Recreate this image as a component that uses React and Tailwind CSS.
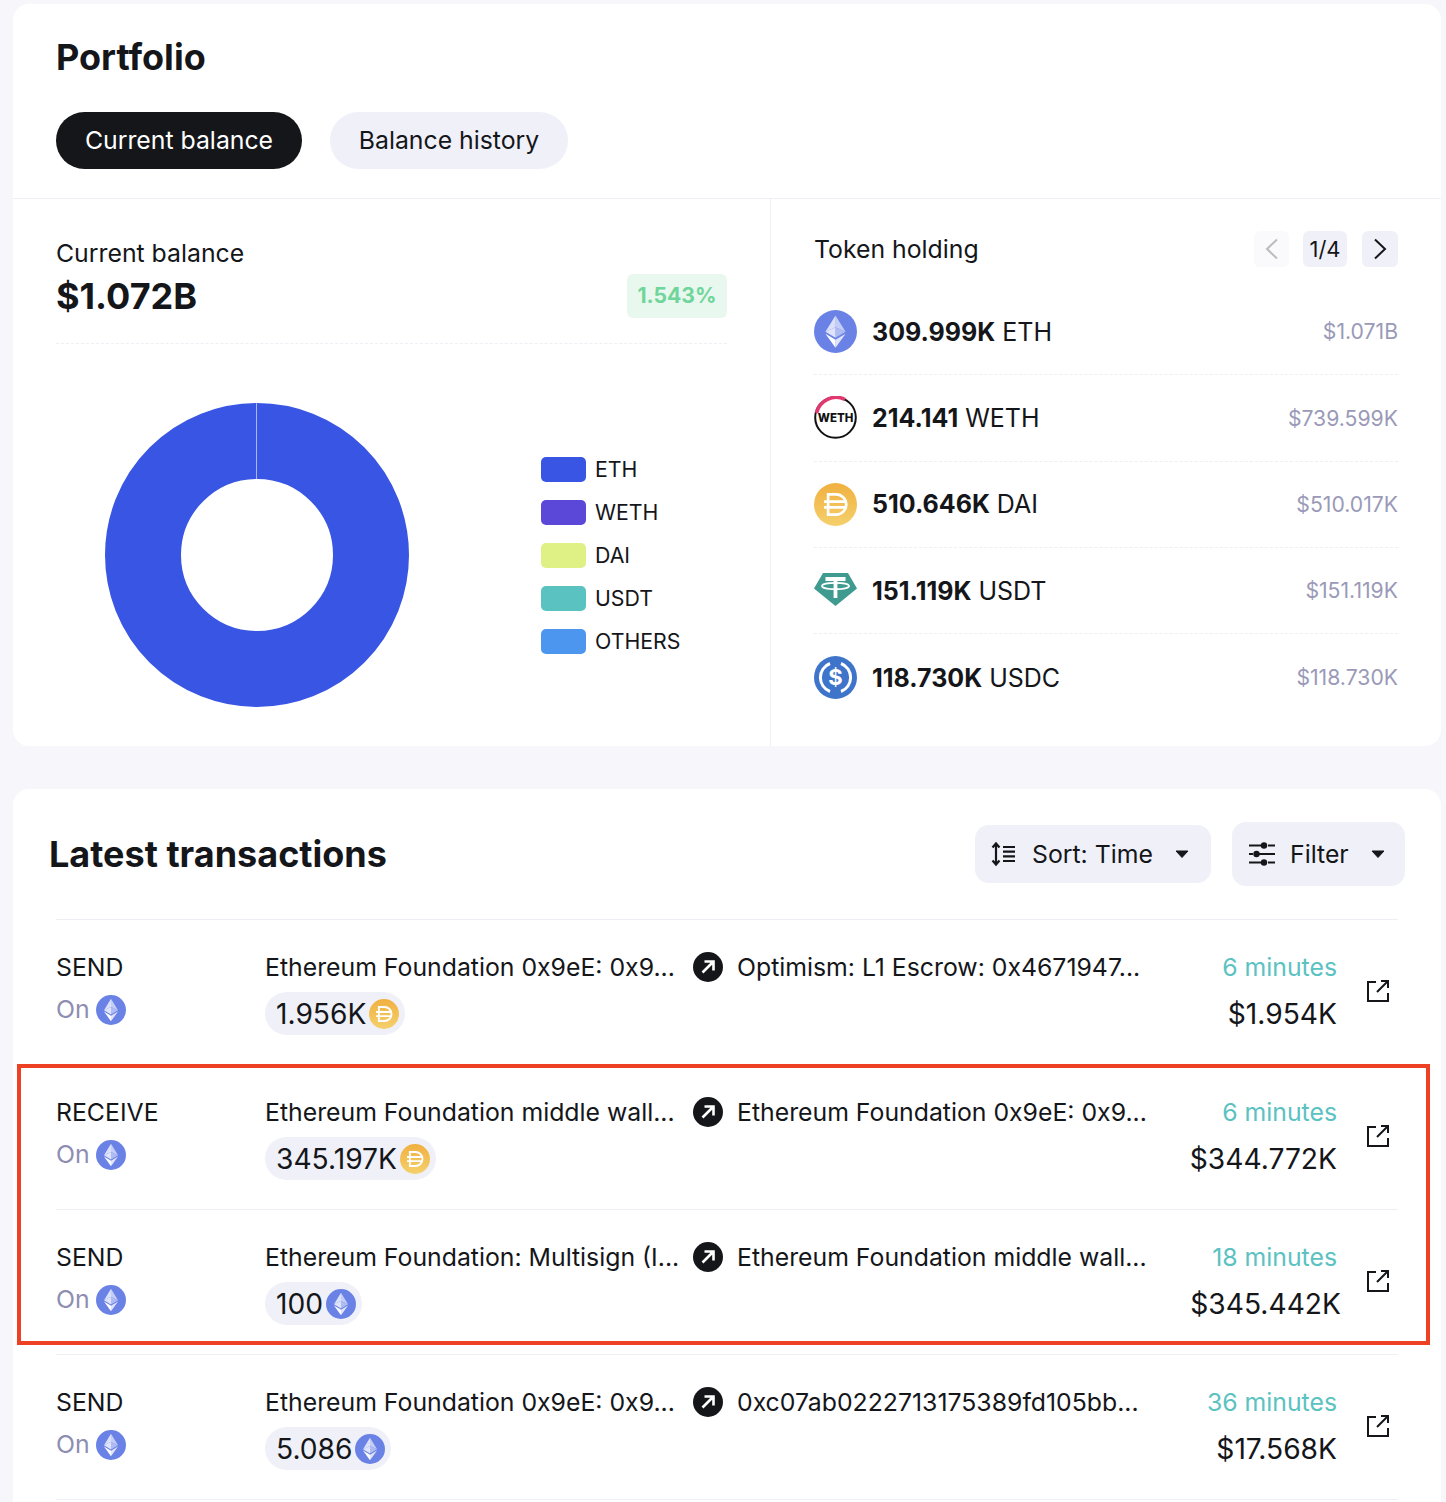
import React from 'react';

const tokens = [
  { amount: '309.999K', symbol: 'ETH', value: '$1.071B' },
  { amount: '214.141', symbol: 'WETH', value: '$739.599K' },
  { amount: '510.646K', symbol: 'DAI', value: '$510.017K' },
  { amount: '151.119K', symbol: 'USDT', value: '$151.119K' },
  { amount: '118.730K', symbol: 'USDC', value: '$118.730K' },
];

const legend = [
  { name: 'ETH', color: 'bg-[#3955e3]' },
  { name: 'WETH', color: 'bg-[#5b48d9]' },
  { name: 'DAI', color: 'bg-[#dff085]' },
  { name: 'USDT', color: 'bg-[#5bc2c2]' },
  { name: 'OTHERS', color: 'bg-[#4d96ef]' },
];

const transactions = [
  { type: 'SEND', from: 'Ethereum Foundation 0x9eE: 0x9...', to: 'Optimism: L1 Escrow: 0x4671947...', amount: '1.956K', coin: 'DAI', time: '6 minutes', usd: '$1.954K' },
  { type: 'RECEIVE', from: 'Ethereum Foundation middle wall...', to: 'Ethereum Foundation 0x9eE: 0x9...', amount: '345.197K', coin: 'DAI', time: '6 minutes', usd: '$344.772K' },
  { type: 'SEND', from: 'Ethereum Foundation: Multisign (I...', to: 'Ethereum Foundation middle wall...', amount: '100', coin: 'ETH', time: '18 minutes', usd: '$345.442K', over: true },
  { type: 'SEND', from: 'Ethereum Foundation 0x9eE: 0x9...', to: '0xc07ab0222713175389fd105bb...', amount: '5.086', coin: 'ETH', time: '36 minutes', usd: '$17.568K' },
];

const EthCoin = ({ size }) => (
  <svg width={size} height={size} viewBox="0 0 32 32" className="shrink-0">
    <circle cx="16" cy="16" r="16" fill="#6a82e6" />
    <path d="M16 4v8.900l7.500 3.300z" fill="#c3cdf6" />
    <path d="M16 4 8.500 16.200l7.500-3.300z" fill="#fff" fillOpacity=".75" />
    <path d="M16 12.900v7.800l7.500-4.500z" fill="#aebcf2" />
    <path d="M16 12.900l-7.500 3.300 7.500 4.500z" fill="#dfe4fa" />
    <path d="M16 22.200V28l7.500-10.400z" fill="#dfe4fa" />
    <path d="M16 22.200l-7.500-4.600L16 28z" fill="#fff" />
  </svg>
);

const DaiCoin = ({ size, id }) => (
  <svg width={size} height={size} viewBox="0 0 32 32" className="shrink-0">
    <defs>
      <linearGradient id={id} x1="0" y1="0" x2="0" y2="1">
        <stop offset="0" stopColor="#f0b040" />
        <stop offset="1" stopColor="#f5d06c" />
      </linearGradient>
    </defs>
    <circle cx="16" cy="16" r="16" fill={`url(#${id})`} />
    <path d="M10.500 8.500h6a7.500 7.500 0 0 1 0 15h-6z" fill="none" stroke="#fff" strokeWidth="2" />
    <path d="M7.500 13.800h17M7.500 18.200h17" stroke="#fff" strokeWidth="2" />
  </svg>
);

const WethCoin = () => (
  <svg width="43" height="43" viewBox="0 0 43 43" className="shrink-0">
    <circle cx="21.500" cy="21.500" r="20.300" fill="#fff" stroke="#111" strokeWidth="2" />
    <path d="M2.500 17A20 20 0 0 1 31 3.500" fill="none" stroke="#e0386f" strokeWidth="3.600" />
    <text x="21.500" y="25.500" textAnchor="middle" fontSize="11.500" fontWeight="800" fill="#111" fontFamily="Inter, sans-serif">WETH</text>
  </svg>
);

const UsdtCoin = () => (
  <svg width="43" height="43" viewBox="0 0 43 43" className="shrink-0">
    <path d="M9 4h25l9 15.500L21.500 37 0 19.500z" fill="#3f9a90" />
    <path d="M11.500 10h20M21.500 10v19" stroke="#fff" strokeWidth="3.800" fill="none" />
    <ellipse cx="21.500" cy="17" rx="13.500" ry="3.200" fill="none" stroke="#fff" strokeWidth="1.800" />
  </svg>
);

const UsdcCoin = () => (
  <svg width="43" height="43" viewBox="0 0 43 43" className="shrink-0">
    <circle cx="21.500" cy="21.500" r="21.500" fill="#3f74cb" />
    <path d="M16 7.500a15 15 0 0 0 0 28M27 7.500a15 15 0 0 1 0 28" fill="none" stroke="#fff" strokeWidth="3" />
    <text x="21.500" y="29" textAnchor="middle" fontSize="22" fontWeight="700" fill="#fff" fontFamily="Inter, sans-serif">$</text>
  </svg>
);

const TokenIcon = ({ symbol }) => {
  if (symbol === 'ETH') return <EthCoin size={43} />;
  if (symbol === 'WETH') return <WethCoin />;
  if (symbol === 'DAI') return <DaiCoin size={43} id="dai-token" />;
  if (symbol === 'USDT') return <UsdtCoin />;
  return <UsdcCoin />;
};

const Caret = () => (
  <svg width="14" height="8" viewBox="0 0 14 8" className="shrink-0">
    <path d="M1 1h12L7 7.500z" fill="#14161a" stroke="#14161a" strokeLinejoin="round" />
  </svg>
);

const SortIcon = () => (
  <svg width="26" height="26" viewBox="0 0 26 26" fill="none" stroke="#14161a" strokeWidth="2.200" className="shrink-0">
    <path d="M6 3v20M2.500 6.500 6 2.500l3.500 4M2.500 19.500l3.500 4 3.500-4" />
    <path d="M13 6h12M13 10.700h12M13 15.300h12M13 20h12" />
  </svg>
);

const FilterIcon = () => (
  <svg width="28" height="24" viewBox="0 0 28 24" fill="none" stroke="#14161a" strokeWidth="2.200" className="shrink-0">
    <path d="M1 3.500h13M20 3.500h7M1 12h4M11 12h16M1 20.500h13M20 20.500h7" />
    <circle cx="16" cy="3.500" r="3.200" fill="#14161a" stroke="none" />
    <circle cx="8.500" cy="12" r="3.200" fill="#14161a" stroke="none" />
    <circle cx="16" cy="20.500" r="3.200" fill="#14161a" stroke="none" />
  </svg>
);

const ArrowBadge = () => (
  <svg width="30" height="30" viewBox="0 0 30 30" className="shrink-0">
    <circle cx="15" cy="15" r="15" fill="#14161a" />
    <path d="M9.500 20.500 20 10M11.500 9.500H20.500V18.500" fill="none" stroke="#fff" strokeWidth="2.600" />
  </svg>
);

const ExternalIcon = () => (
  <svg width="22" height="22" viewBox="0 0 22 22" fill="none" stroke="#14161a" strokeWidth="2" className="shrink-0">
    <path d="M9 2H1v19h20v-8" />
    <path d="M10 12 20.500 1.500M14 1h7v7" />
  </svg>
);

const Donut = () => (
  <svg width="304" height="304" viewBox="0 0 304 304">
    <circle cx="152" cy="152" r="114" fill="none" stroke="#3955e3" strokeWidth="76" />
    <path d="M151.500 0v76" stroke="#a9b6f0" strokeWidth="1" />
  </svg>
);

const TxRow = ({ tx }) => (
  <div className="flex items-start h-[145px] pt-[32px] border-b border-[#eeeef5]">
    <div className="w-[209px] shrink-0">
      <div className="h-[30px] leading-[30px] text-[24.800px] text-[#14161a]">{tx.type}</div>
      <div className="flex items-center gap-[6px] mt-[13px] h-[30px]">
        <span className="text-[24.800px] text-[#8e8eb2]">On</span>
        <EthCoin size={30} />
      </div>
    </div>
    <div className="w-[428px] shrink-0">
      <div className="h-[30px] leading-[30px] text-[24.800px] text-[#14161a] whitespace-nowrap">{tx.from}</div>
      <div className="inline-flex items-center h-[43px] mt-[10px] pl-[11px] pr-[6px] gap-[3px] rounded-full bg-[#f0f1f8]">
        <span className="text-[28.200px] pt-px text-[#14161a]">{tx.amount}</span>
        {tx.coin === 'DAI' ? <DaiCoin size={30} id={`dai-${tx.amount}`} /> : <EthCoin size={30} />}
      </div>
    </div>
    <ArrowBadge />
    <div className="ml-[14px] flex-1 min-w-0 h-[30px] leading-[30px] text-[24.800px] text-[#14161a] whitespace-nowrap">{tx.to}</div>
    <div className="w-[190px] shrink-0 text-right">
      <div className="h-[30px] leading-[30px] text-[24.800px] text-[#5bc2c2]">{tx.time}</div>
      <div className={`h-[43px] leading-[45px] mt-[10px] text-[28.200px] text-[#14161a] ${tx.over ? '-mr-[4px]' : ''}`}>{tx.usd}</div>
    </div>
    <div className="ml-[30px] mr-[9px] mt-[28px]">
      <ExternalIcon />
    </div>
  </div>
);

export default function App() {
  return (
    <div className="relative h-[1502px] overflow-hidden bg-[#f6f6fb] pl-[13px] pr-[5px] pt-[4px] font-['Inter',sans-serif]">
      <section className="rounded-[16px] bg-white h-[742px]">
        <div className="h-[195px] pl-[43px] pt-[31px] border-b border-[#eeeef5]">
          <h1 className="text-[36px] leading-[44px] font-bold text-[#14161a]">Portfolio</h1>
          <div className="flex gap-[28px] mt-[33px]">
            <button className="h-[57px] w-[246px] rounded-full bg-[#14161a] text-white text-[24.800px]">Current balance</button>
            <button className="h-[57px] w-[238px] rounded-full bg-[#f0f1f8] text-[#14161a] text-[24.800px]">Balance history</button>
          </div>
        </div>

        <div className="flex h-[547px]">
          <div className="w-[758px] shrink-0 border-r border-[#eeeef5] px-[43px]">
            <div className="flex justify-between h-[145px] pt-[37px] border-b border-dashed border-[#eeeef5]">
              <div>
                <div className="text-[24.800px] leading-[34px] text-[#14161a]">Current balance</div>
                <div className="text-[36px] leading-[52px] font-bold text-[#14161a]">$1.072B</div>
              </div>
              <div className="mt-[38px] w-[100px] h-[44px] rounded-[6px] bg-[#e8f8ee] text-[#6fd59a] text-[21.200px] font-bold flex items-center justify-center">1.543%</div>
            </div>
            <div className="flex items-center">
              <div className="ml-[49px] mt-[59px]">
                <Donut />
              </div>
              <div className="ml-[132px] mt-[59px] flex flex-col gap-[18px]">
                {legend.map((item) => (
                  <div key={item.name} className="flex items-center gap-[9px] h-[25px]">
                    <span className={`w-[45px] h-[25px] rounded-[5px] ${item.color}`} />
                    <span className="text-[21.300px] pt-[2px] text-[#14161a]">{item.name}</span>
                  </div>
                ))}
              </div>
            </div>
          </div>

          <div className="flex-1 px-[43px]">
            <div className="flex items-center justify-between h-[32px] mt-[34px]">
              <span className="text-[24.800px] pt-[1px] text-[#14161a]">Token holding</span>
              <div className="flex items-center">
                <button className="w-[35px] h-[36px] rounded-[6px] bg-[#fafafc] flex items-center justify-center">
                  <svg width="14" height="22" viewBox="0 0 14 22" fill="none" stroke="#bcbcc0" strokeWidth="2"><path d="M12 1.500 2 11l10 9.500" /></svg>
                </button>
                <div className="ml-[14px] w-[44px] h-[36px] rounded-[6px] bg-[#f0f1f8] flex items-center justify-center text-[22px] text-[#14161a]">1/4</div>
                <button className="ml-[15px] w-[36px] h-[36px] rounded-[6px] bg-[#f0f1f8] flex items-center justify-center">
                  <svg width="14" height="22" viewBox="0 0 14 22" fill="none" stroke="#14161a" strokeWidth="2"><path d="M2 1.500 12 11 2 20.500" /></svg>
                </button>
              </div>
            </div>
            <div className="mt-[24px]">
              {tokens.map((t, i) => (
                <div key={t.symbol} className={`flex items-center h-[86.300px] ${i < 4 ? 'border-b border-dashed border-[#eeeef5]' : ''}`}>
                  <TokenIcon symbol={t.symbol} />
                  <span className="ml-[15px] pt-[2px] text-[25px] font-bold text-[#14161a]">{t.amount}</span>
                  <span className="ml-[7px] pt-[2px] text-[25px] text-[#14161a]">{t.symbol}</span>
                  <span className="ml-auto text-[21.200px] pt-px text-[#9a9ab8]">{t.value}</span>
                </div>
              ))}
            </div>
          </div>
        </div>
      </section>

      <section className="mt-[43px] rounded-[16px] bg-white h-[760px] px-[43px]">
        <div className="flex items-center h-[131px] border-b border-[#eeeef5]">
          <h2 className="-ml-[7px] text-[36px] font-bold text-[#14161a]">Latest transactions</h2>
          <button className="ml-auto flex items-center w-[236px] h-[58px] rounded-[14px] bg-[#f0f1f8] pl-[15px] text-[24.800px] text-[#14161a]">
            <SortIcon />
            <span className="ml-[16px] pt-[2px]">Sort: Time</span>
            <span className="ml-[22px]"><Caret /></span>
          </button>
          <button className="ml-[21px] -mr-[7px] flex items-center w-[173px] h-[64px] rounded-[14px] bg-[#f0f1f8] pl-[16px] text-[24.800px] text-[#14161a]">
            <FilterIcon />
            <span className="ml-[14px] pt-[2px]">Filter</span>
            <span className="ml-[22px]"><Caret /></span>
          </button>
        </div>
        {transactions.map((tx, i) => (
          <TxRow key={tx.from + i} tx={tx} />
        ))}
      </section>

      {/* highlight drawn over rows 2 and 3 */}
      <div className="absolute left-[17px] top-[1064px] w-[1413px] h-[281px] border-[4px] border-[#ee4023] pointer-events-none" />
    </div>
  );
}
